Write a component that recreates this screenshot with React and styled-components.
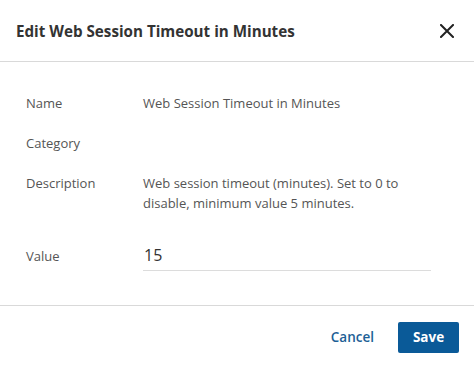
import React, { useState } from "react";
import styled, { createGlobalStyle } from "styled-components";

const GlobalStyle = createGlobalStyle`
  html, body {
    margin: 0;
    padding: 0;
    background: #fff;
  }
  body {
    font-family: "Open Sans", "Noto Sans", sans-serif;
    color: #333;
  }
`;

const Dialog = styled.div`
  width: 474px;
  height: 368px;
  background: #fff;
  display: flex;
  flex-direction: column;
`;

const Header = styled.div`
  height: 62px;
  flex-shrink: 0;
  box-sizing: border-box;
  padding: 0 17px 0 16px;
  display: flex;
  align-items: center;
  justify-content: space-between;
  border-bottom: 1px solid #d9d9d9;
`;

const Title = styled.h2`
  margin: 0;
  font-size: 15.2px;
  font-weight: 700;
  color: #333;
`;

const CloseButton = styled.button`
  width: 20px;
  height: 20px;
  padding: 0;
  border: none;
  background: none;
  display: flex;
  align-items: center;
  justify-content: center;
  cursor: pointer;
`;

const Body = styled.div`
  height: 244px;
  box-sizing: border-box;
  flex-shrink: 0;
  padding: 31px 43px 0 26px;
  display: grid;
  grid-template-columns: 117px 1fr;
  row-gap: 20px;
  align-content: start;
  border-bottom: 1px solid #d9d9d9;
`;

const Label = styled.div`
  font-size: 13px;
  line-height: 20px;
  color: #555;
  margin-top: ${(p) => p.$offset || 0}px;
`;

const Text = styled.div`
  font-size: 13px;
  line-height: 20px;
  color: #555;
  min-height: 20px;
`;

const ValueInput = styled.input`
  margin-top: 7px;
  width: 100%;
  height: 31px;
  box-sizing: border-box;
  border: none;
  border-bottom: 1px solid #dcdcdc;
  padding: 4px 0 4px 1px;
  font-family: inherit;
  font-size: 16px;
  line-height: 22px;
  color: #333;
  outline: none;
  background: transparent;
`;

const Footer = styled.div`
  flex: 1;
  display: flex;
  align-items: center;
  justify-content: flex-end;
  gap: 24px;
  padding: 0 15px;
`;

const Button = styled.button`
  font-family: inherit;
  font-size: 13.5px;
  font-weight: ${(p) => (p.$primary ? 700 : 600)};
  height: 31px;
  padding: 0;
  width: ${(p) => (p.$primary ? "61px" : "auto")};
  border: none;
  border-radius: 2px;
  color: ${(p) => (p.$primary ? "#fff" : "#1d5f96")};
  background: ${(p) => (p.$primary ? "#0a5a98" : "transparent")};
  cursor: pointer;
`;

export default function App() {
  const [value, setValue] = useState("15");

  return (
    <>
      <GlobalStyle />
      <Dialog>
        <Header>
          <Title>Edit Web Session Timeout in Minutes</Title>
          <CloseButton aria-label="Close">
            <svg width="14" height="14" viewBox="0 0 14 14">
              <path
                d="M1 1L13 13M13 1L1 13"
                stroke="#222"
                strokeWidth="2"
                strokeLinecap="square"
              />
            </svg>
          </CloseButton>
        </Header>
        <Body>
          <Label>Name</Label>
          <Text>Web Session Timeout in Minutes</Text>
          <Label>Category</Label>
          <Text />
          <Label>Description</Label>
          <Text>
            Web session timeout (minutes). Set to 0 to disable, minimum value 5
            minutes.
          </Text>
          <Label $offset={13}>Value</Label>
          <ValueInput value={value} onChange={(e) => setValue(e.target.value)} />
        </Body>
        <Footer>
          <Button>Cancel</Button>
          <Button $primary>Save</Button>
        </Footer>
      </Dialog>
    </>
  );
}
